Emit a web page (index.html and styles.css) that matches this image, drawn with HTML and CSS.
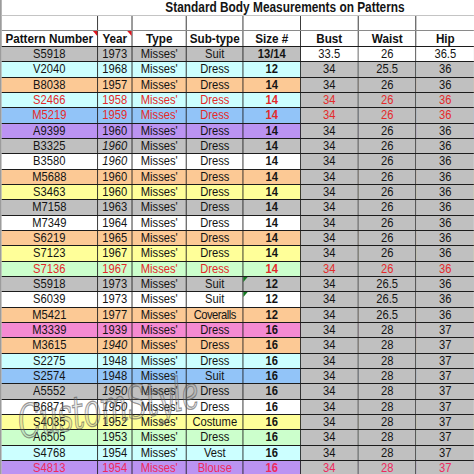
FILE: index.html
```html
<!DOCTYPE html>
<html>
<head>
<meta charset="utf-8">
<link rel="stylesheet" href="styles.css">
</head>
<body>
<div class="frame">
<div class="sheet">
  <div class="row title"><div class="cell"></div><div class="cell ttl">Standard Body Measurements on Patterns</div></div>
  <div class="row blank"><div class="cell"></div><div class="cell"></div><div class="cell"></div><div class="cell"></div><div class="cell"></div><div class="cell"></div><div class="cell"></div><div class="cell"></div></div>
  <div class="row head"><div class="cell note">Pattern Number</div><div class="cell note">Year</div><div class="cell">Type</div><div class="cell">Sub-type</div><div class="cell">Size #</div><div class="cell">Bust</div><div class="cell">Waist</div><div class="cell">Hip</div></div>

  <div class="row g first"><div class="cell">S5918</div><div class="cell">1973</div><div class="cell">Misses'</div><div class="cell">Suit</div><div class="cell sz">13/14</div><div class="cell m">33.5</div><div class="cell m">26</div><div class="cell m">36.5</div></div>
  <div class="row c"><div class="cell">V2040</div><div class="cell">1968</div><div class="cell">Misses'</div><div class="cell">Dress</div><div class="cell sz">12</div><div class="cell m">34</div><div class="cell m">25.5</div><div class="cell m">36</div></div>
  <div class="row p"><div class="cell">B8038</div><div class="cell">1957</div><div class="cell">Misses'</div><div class="cell">Dress</div><div class="cell sz">14</div><div class="cell m">34</div><div class="cell m">26</div><div class="cell m">36</div></div>
  <div class="row c red"><div class="cell">S2466</div><div class="cell">1958</div><div class="cell">Misses'</div><div class="cell">Dress</div><div class="cell sz">14</div><div class="cell m">34</div><div class="cell m">26</div><div class="cell m">36</div></div>
  <div class="row b red"><div class="cell">M5219</div><div class="cell">1959</div><div class="cell">Misses'</div><div class="cell">Dress</div><div class="cell sz">14</div><div class="cell m">34</div><div class="cell m">26</div><div class="cell m">36</div></div>
  <div class="row v"><div class="cell">A9399</div><div class="cell">1960</div><div class="cell">Misses'</div><div class="cell">Dress</div><div class="cell sz">14</div><div class="cell m">34</div><div class="cell m">26</div><div class="cell m">36</div></div>
  <div class="row g"><div class="cell">B3325</div><div class="cell it">1960</div><div class="cell">Misses'</div><div class="cell">Dress</div><div class="cell sz">14</div><div class="cell m">34</div><div class="cell m">26</div><div class="cell m">36</div></div>
  <div class="row w"><div class="cell">B3580</div><div class="cell it">1960</div><div class="cell">Misses'</div><div class="cell">Dress</div><div class="cell sz">14</div><div class="cell m">34</div><div class="cell m">26</div><div class="cell m">36</div></div>
  <div class="row p"><div class="cell">M5688</div><div class="cell">1960</div><div class="cell">Misses'</div><div class="cell">Dress</div><div class="cell sz">14</div><div class="cell m">34</div><div class="cell m">26</div><div class="cell m">36</div></div>
  <div class="row y"><div class="cell">S3463</div><div class="cell">1960</div><div class="cell">Misses'</div><div class="cell">Dress</div><div class="cell sz">14</div><div class="cell m">34</div><div class="cell m">26</div><div class="cell m">36</div></div>
  <div class="row g"><div class="cell">M7158</div><div class="cell">1963</div><div class="cell">Misses'</div><div class="cell">Dress</div><div class="cell sz">14</div><div class="cell m">34</div><div class="cell m">26</div><div class="cell m">36</div></div>
  <div class="row w"><div class="cell">M7349</div><div class="cell">1964</div><div class="cell">Misses'</div><div class="cell">Dress</div><div class="cell sz">14</div><div class="cell m">34</div><div class="cell m">26</div><div class="cell m">36</div></div>
  <div class="row p"><div class="cell">S6219</div><div class="cell">1965</div><div class="cell">Misses'</div><div class="cell">Dress</div><div class="cell sz">14</div><div class="cell m">34</div><div class="cell m">26</div><div class="cell m">36</div></div>
  <div class="row y"><div class="cell">S7123</div><div class="cell">1967</div><div class="cell">Misses'</div><div class="cell">Dress</div><div class="cell sz">14</div><div class="cell m">34</div><div class="cell m">26</div><div class="cell m">36</div></div>
  <div class="row l red"><div class="cell">S7136</div><div class="cell">1967</div><div class="cell">Misses'</div><div class="cell">Dress</div><div class="cell sz">14</div><div class="cell m">34</div><div class="cell m">26</div><div class="cell m">36</div></div>
  <div class="row g"><div class="cell">S5918</div><div class="cell">1973</div><div class="cell">Misses'</div><div class="cell">Suit</div><div class="cell sz flag">12</div><div class="cell m">34</div><div class="cell m">26.5</div><div class="cell m">36</div></div>
  <div class="row w"><div class="cell">S6039</div><div class="cell">1973</div><div class="cell">Misses'</div><div class="cell">Suit</div><div class="cell sz flag">12</div><div class="cell m">34</div><div class="cell m">26.5</div><div class="cell m">36</div></div>
  <div class="row p"><div class="cell">M5421</div><div class="cell">1977</div><div class="cell">Misses'</div><div class="cell tight">Coveralls</div><div class="cell sz">12</div><div class="cell m">34</div><div class="cell m">26.5</div><div class="cell m">36</div></div>
  <div class="row k"><div class="cell">M3339</div><div class="cell">1939</div><div class="cell">Misses'</div><div class="cell">Dress</div><div class="cell sz">16</div><div class="cell m">34</div><div class="cell m">28</div><div class="cell m">37</div></div>
  <div class="row p"><div class="cell">M3615</div><div class="cell it">1940</div><div class="cell">Misses'</div><div class="cell">Dress</div><div class="cell sz">16</div><div class="cell m">34</div><div class="cell m">28</div><div class="cell m">37</div></div>
  <div class="row c"><div class="cell">S2275</div><div class="cell">1948</div><div class="cell">Misses'</div><div class="cell">Dress</div><div class="cell sz">16</div><div class="cell m">34</div><div class="cell m">28</div><div class="cell m">37</div></div>
  <div class="row b"><div class="cell">S2574</div><div class="cell">1948</div><div class="cell">Misses'</div><div class="cell">Suit</div><div class="cell sz">16</div><div class="cell m">34</div><div class="cell m">28</div><div class="cell m">37</div></div>
  <div class="row g"><div class="cell">A5552</div><div class="cell it">1950</div><div class="cell">Misses'</div><div class="cell">Dress</div><div class="cell sz">16</div><div class="cell m">34</div><div class="cell m">28</div><div class="cell m">37</div></div>
  <div class="row w"><div class="cell">B6871</div><div class="cell it">1950</div><div class="cell">Misses'</div><div class="cell">Dress</div><div class="cell sz">16</div><div class="cell m">34</div><div class="cell m">28</div><div class="cell m">37</div></div>
  <div class="row y"><div class="cell">S4035</div><div class="cell">1952</div><div class="cell">Misses'</div><div class="cell">Costume</div><div class="cell sz">16</div><div class="cell m">34</div><div class="cell m">28</div><div class="cell m">37</div></div>
  <div class="row l"><div class="cell">A6505</div><div class="cell">1953</div><div class="cell">Misses'</div><div class="cell">Dress</div><div class="cell sz">16</div><div class="cell m">34</div><div class="cell m">28</div><div class="cell m">37</div></div>
  <div class="row c"><div class="cell">S4768</div><div class="cell">1954</div><div class="cell">Misses'</div><div class="cell">Vest</div><div class="cell sz">16</div><div class="cell m">34</div><div class="cell m">28</div><div class="cell m">37</div></div>
  <div class="row v rose"><div class="cell">S4813</div><div class="cell">1954</div><div class="cell">Misses'</div><div class="cell">Blouse</div><div class="cell sz">16</div><div class="cell m">34</div><div class="cell m">28</div><div class="cell m">37</div></div>
</div>
<div class="watermark">CustomStyle</div>
</div>
</body>
</html>
```

FILE: styles.css
```css
html, body {
  margin: 0;
  padding: 0;
  width: 474px;
  height: 474px;
  overflow: hidden;
  background: #fff;
}

body {
  font-family: "Liberation Sans", Arial, sans-serif;
  color: #141414;
}

.frame {
  position: relative;
  width: 474px;
  height: 474px;
  overflow: hidden;
}

.sheet {
  width: 551.2px;
  box-sizing: border-box;
  border-left: 2.3px solid #9c9c9c;
  transform: scaleX(0.86);
  transform-origin: 0 0;
}

.row {
  display: grid;
  grid-template-columns: 111.6px 40.7px 62.8px 66.3px 66.3px 67.4px 67.4px 1fr;
  box-sizing: border-box;
  height: 15.33px;
  border-bottom: 1px solid #1c1c1c;
  font-size: 13px;
  line-height: 14.33px;
}

.cell {
  position: relative;
  box-sizing: border-box;
  border-right: 1.17px solid #1c1c1c;
  text-align: center;
  white-space: nowrap;
}

.cell:last-child {
  border-right: none;
}

/* top rows */
.title {
  height: 16px;
  border-bottom: 1px solid #c4c4c4;
  line-height: 15px;
}

.title .cell {
  border-right: none;
}

.ttl {
  grid-column: 2 / -1;
  font-weight: bold;
  font-size: 13.8px;
  padding-right: 2px;
}

.blank {
  height: 15px;
  border-bottom: 1px solid #8a8a8a;
}

.head {
  height: 16px;
  line-height: 15px;
  font-weight: bold;
  font-size: 13.6px;
  color: #111;
}

.note::after {
  content: "";
  position: absolute;
  top: 0;
  right: 0;
  border-top: 5px solid #e0141e;
  border-left: 5px solid transparent;
}

/* row colours */
.g { background: #c0c0c0; }
.w { background: #ffffff; }
.c { background: #ccffff; }
.p { background: #fcc995; }
.b { background: #92c4f8; }
.v { background: #bb93f2; }
.y { background: #ffff99; }
.l { background: #ccffcc; }
.k { background: #f48ad2; }

.m { background: #c0c0c0; }
.first .m { background: #ffffff; }

.sz { font-weight: bold; }
.it { font-style: italic; }
.tight { letter-spacing: -0.6px; }

.red { color: #e42a2a; }
.rose { color: #ee2a5e; }

.flag::before {
  content: "";
  position: absolute;
  top: 0;
  left: 0;
  border-top: 5px solid #157a22;
  border-right: 5px solid transparent;
}

.watermark {
  position: absolute;
  left: 18px;
  top: 396px;
  font-family: "DejaVu Serif", serif;
  font-style: italic;
  font-size: 46px;
  line-height: 54px;
  letter-spacing: -1px;
  color: rgba(150, 150, 150, 0.22);
  -webkit-text-stroke: 1.2px rgba(85, 85, 85, 0.6);
  transform: rotate(-10deg) scaleX(0.64);
  transform-origin: 0 50%;
  pointer-events: none;
}
```
